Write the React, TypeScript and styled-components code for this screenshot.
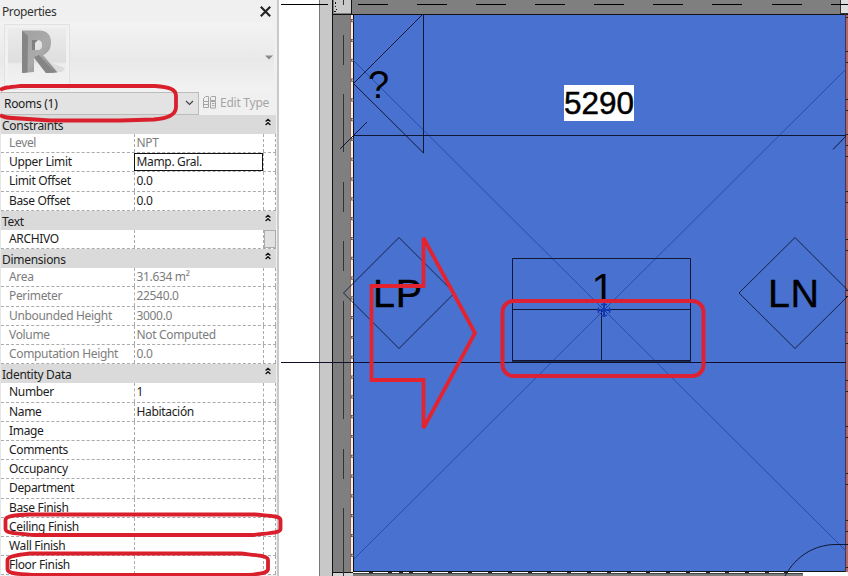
import React from "react";
import styled, { createGlobalStyle } from "styled-components";

const GlobalStyle = createGlobalStyle`
  * { box-sizing: border-box; }
  body { margin: 0; background: #fff; overflow: hidden; }
`;

const Screen = styled.main`
  position: relative;
  display: flex;
  width: 848px;
  height: 576px;
  overflow: hidden;
  background: #fff;
  font-family: "Noto Sans", "Open Sans", sans-serif;
  font-size: 12px;
  color: #1c1c1c;
`;

const Panel = styled.aside`
  flex: none;
  display: flex;
  flex-direction: column;
  width: 279px;
  height: 576px;
  padding-right: 3px;
  background: #f0f0f0;
  border-right: 2px solid #c9c9c9;
`;

const TitleBar = styled.header`
  display: flex;
  flex: none;
  align-items: center;
  justify-content: space-between;
  height: 22px;
  padding: 1px 2px 0 2px;
`;

const Title = styled.span`
  letter-spacing: -0.4px;
  color: #333;
`;

const Preview = styled.section`
  display: flex;
  flex: none;
  align-items: center;
  justify-content: space-between;
  height: 70px;
  padding: 0 1px 0 4px;
  background: linear-gradient(#f3f3f3, #e9e9e9 55%, #f2f2f2);
`;

const TypeBar = styled.section`
  display: flex;
  flex: none;
  height: 22.8px;
`;

const TypeSelect = styled.div`
  display: flex;
  align-items: center;
  justify-content: space-between;
  width: 199px;
  padding: 0 4px;
  background: #e3e3e3;
  border: 1px solid #bcbcbc;
  border-left: 0;
  letter-spacing: -0.3px;
`;

const EditType = styled.div`
  display: flex;
  align-items: center;
  gap: 3px;
  padding: 0 0 2px 4px;
  color: #a5a5a5;
  white-space: nowrap;
  letter-spacing: -0.25px;
`;

const Grid = styled.div`
  display: flex;
  flex-direction: column;
  width: 276px;
  background: #fff;
  border-left: 1px solid #e6e6e6;
`;

const GroupRow = styled.div`
  display: flex;
  flex: none;
  justify-content: space-between;
  height: 19.2px;
  padding: 0 5px 0 1px;
  background: #dadada;
  line-height: 21px;
  letter-spacing: -0.28px;
  color: #222;
`;

const PropertyRow = styled.div<{ $muted?: boolean }>`
  display: grid;
  flex: none;
  grid-template-columns: 133px 129px 13px;
  height: 19.2px;
  line-height: 18px;
  letter-spacing: -0.33px;
  white-space: nowrap;
  border-bottom: 1px dashed #ababab;
  color: ${(p) => (p.$muted ? "#7d7d7d" : "#1c1c1c")};
`;

const NameCell = styled.span`
  padding-left: 8px;
`;

const ValueCell = styled.span<{ $active?: boolean }>`
  padding-left: 1.5px;
  border-left: 1px dashed #ababab;
  ${(p) => p.$active && "border: 1px solid #111; line-height: 16px;"}
`;

const ButtonCell = styled.span`
  display: flex;
  border-left: 1px dashed #ababab;
  border-right: 1px dashed #ababab;
`;

const CellButton = styled.i`
  flex: 1;
  margin-right: -1px;
  background: #e1e1e1;
  border: 1px solid #adadad;
`;

const Canvas = styled.svg`
  display: block;
  flex: none;
  width: 569px;
  height: 576px;
`;

const Markup = styled.svg`
  position: absolute;
  inset: 0;
  width: 848px;
  height: 576px;
  pointer-events: none;
`;

type Property = { name: string; value?: string; muted?: boolean; active?: boolean; button?: boolean };
type Group = { title: string; items: Property[] };

const groups: Group[] = [
  {
    title: "Constraints",
    items: [
      { name: "Level", value: "NPT", muted: true },
      { name: "Upper Limit", value: "Mamp. Gral.", active: true },
      { name: "Limit Offset", value: "0.0" },
      { name: "Base Offset", value: "0.0" },
    ],
  },
  { title: "Text", items: [{ name: "ARCHIVO", button: true }] },
  {
    title: "Dimensions",
    items: [
      { name: "Area", value: "31.634 m²", muted: true },
      { name: "Perimeter", value: "22540.0", muted: true },
      { name: "Unbounded Height", value: "3000.0", muted: true },
      { name: "Volume", value: "Not Computed", muted: true },
      { name: "Computation Height", value: "0.0", muted: true },
    ],
  },
  {
    title: "Identity Data",
    items: [
      { name: "Number", value: "1" },
      { name: "Name", value: "Habitación" },
      { name: "Image" },
      { name: "Comments" },
      { name: "Occupancy" },
      { name: "Department" },
      { name: "Base Finish" },
      { name: "Ceiling Finish" },
      { name: "Wall Finish" },
      { name: "Floor Finish" },
    ],
  },
];

const CloseIcon = () => (
  <svg width="13" height="12" viewBox="0 0 13 12">
    <path d="M1.8 .8 11.200 10.200M11.200 .8 1.800 10.200" stroke="#222" strokeWidth="2.100" />
  </svg>
);

const CollapseIcon = () => (
  <svg width="6" height="14" viewBox="0 -2.500 6 14">
    <path d="M.6 4 3 1.800 5.400 4M.6 7.400 3 5.200 5.400 7.400" fill="none" stroke="#111" strokeWidth="1.300" />
  </svg>
);

const RevitLogo = () => (
  <svg width="66" height="66" viewBox="0 0 66 66">
    <defs>
      <linearGradient id="logoBack" x2="0" y2="1">
        <stop offset="0" stopColor="#ececec" />
        <stop offset=".58" stopColor="#dedede" />
        <stop offset=".62" stopColor="#ececec" />
        <stop offset="1" stopColor="#f2f2f2" />
      </linearGradient>
      <linearGradient id="logoFace" x2="1" y2="1">
        <stop offset="0" stopColor="#a0a0a0" />
        <stop offset=".5" stopColor="#ababab" />
        <stop offset="1" stopColor="#858585" />
      </linearGradient>
    </defs>
    <rect x=".5" y=".5" width="65" height="65" fill="#f1f1f1" stroke="#e2e2e2" />
    <path d="M4 4h58v58H4z" fill="url(#logoBack)" />
    <path d="M40 36 61 44 58 48 44 48z" fill="#dcdcdc" />
    <path
      fillRule="evenodd"
      d="M18 6.500H35C43 6.500 47 11 47 18 47 25 44 29 39 31L53.500 48.500 42 49 30 34V48L18 49zM28 16V26H33C37 26 38 24 38 21 38 17 36 16 32 16z"
      fill="url(#logoFace)"
    />
    <path d="M18 6.500 24 12 23.500 48.500 18 49z" fill="#858585" />
    <path d="M28 16H34L31 19V26H28z" fill="#808080" />
    <path d="M30 33 35 31 51 48.500 42 49z" fill="#858585" />
  </svg>
);

const EditTypeIcon = () => (
  <svg width="14" height="14" viewBox="0 0 14 14" fill="none" stroke="#a5a5a5">
    <path d="M.5 12.500V3.500L2.500 1.500H5.500V12.500zM.5 6.500H5.500M7.500 5.500V2.500L8.500 1.500H12.500V5.500zM.5 9.500H5.500" />
    <path d="M7.500 6.500H12.500V13H7.500zM9 8.500H11.500M9 10.500H11.500" />
  </svg>
);

const PropertiesPanel = () => (
  <Panel>
    <TitleBar>
      <Title>Properties</Title>
      <CloseIcon />
    </TitleBar>
    <Preview>
      <RevitLogo />
      <svg width="8" height="5" viewBox="0 0 8 5">
        <path d="M0 .5H8L4 4.500z" fill="#8a8a8a" />
      </svg>
    </Preview>
    <TypeBar>
      <TypeSelect>
        Rooms (1)
        <svg width="9" height="6" viewBox="0 0 9 6">
          <path d="M1 1 4.500 4.500 8 1" fill="none" stroke="#444" strokeWidth="1.200" />
        </svg>
      </TypeSelect>
      <EditType>
        <EditTypeIcon />
        Edit Type
      </EditType>
    </TypeBar>
    <Grid>
      {groups.map((group) => (
        <React.Fragment key={group.title}>
          <GroupRow>
            {group.title}
            <CollapseIcon />
          </GroupRow>
          {group.items.map((item) => (
            <PropertyRow key={item.name} $muted={item.muted}>
              <NameCell>{item.name}</NameCell>
              <ValueCell $active={item.active}>{item.value}</ValueCell>
              <ButtonCell>{item.button && <CellButton />}</ButtonCell>
            </PropertyRow>
          ))}
        </React.Fragment>
      ))}
    </Grid>
  </Panel>
);

const studs = Array.from({ length: 28 }, (_, i) => 20.5 + i * 19.8);
const brickJoints = [17, 51, 62, 99, 110, 134, 145, 156, 191, 202, 239, 250, 290, 296, 332, 343, 380, 391, 426, 437, 473, 484, 520, 531, 567];
const floorStuds = [369, 388, 399, 409, 428, 448, 468, 488, 508, 528, 547, 567, 587, 607, 627, 646, 666, 686, 706, 725, 745, 765, 784];

const FloorPlan = () => (
  <Canvas viewBox="279 0 569 576" fontFamily='"Liberation Sans", Arial, sans-serif'>
    <rect x="319" y="0" width="14" height="576" fill="#c8c8c8" />
    <rect x="333" y="0" width="19" height="576" fill="#7f7f7f" />
    <rect x="333" y="0" width="515" height="14" fill="#7f7f7f" />
    <rect x="334" y="0" width="18" height="13" fill="#c9c9c9" />
    <rect x="841" y="0" width="7" height="13" fill="#dedede" />
    <rect x="350" y="15" width="1" height="558" fill="#8b6659" />
    <rect x="351" y="15" width="2" height="558" fill="#f3ece2" />
    <rect x="354" y="15" width="492" height="556" fill="#4972d0" />
    <rect x="846" y="15" width="2" height="557" fill="#b36868" />
    <rect x="353" y="572" width="495" height="4" fill="#fff" />
    <rect x="353" y="573" width="450" height="3" fill="#7f7f7f" />
    <rect x="333" y="573" width="20" height="3" fill="#d4d4d4" />
    <g stroke="#111" fill="none">
      <path d="M319.5 0V576" stroke="#777" />
      <path d="M332.5 0V576M333 14.5H848M351.5 0V14M353.5 14V572M353 571.5H846M333 572.5H353" />
      <path d="M845.5 14V572" stroke="#493057" />
      <path d="M840.5 0V14M841 13.5H848" stroke="#333" />
      <path d="M353 573.5H803" stroke="#444" />
      <path d="M281 4.5H328M358 4.5H388M417 4.5H447M476 4.5H506M535 4.5H565M594 4.5H624M653 4.5H683M712 4.5H742M772 4.5H802M831 4.5H848" stroke="#000" />
      <path d="M343.5 35V65M343.5 94V152M343.5 182V212M343.5 241V271M343.5 301V419M343.5 449V479M343.5 508V576M343.5 0V5" stroke="#333" />
      <path d="M335.5 2V4M336 9.5H337M335.5 6V7M334 11.5H336" />
    </g>
    <g fill="#e6dccb" stroke="#444" strokeWidth=".6">
      {studs.map((y) => (
        <rect key={y} x="351.3" y={y - 1} width="1.8" height="2.4" />
      ))}
    </g>
    <g fill="#222">
      {floorStuds.map((x) => (
        <rect key={x} x={x} y="572" width="4" height="1" />
      ))}
      {brickJoints.map((y) => (
        <rect key={y} x="846" y={y} width="2" height="1" />
      ))}
    </g>
    <path d="M354 61 846 551M846 69 354 559" stroke="#214eb4" fill="none" />
    <g stroke="#101735" fill="none">
      <path d="M423.5 14V153L353.5 83.5 422.5 14.5" />
      <path d="M353 135.5H846M340 149 367 122M833 149.5 846 136" />
      <path d="M281 362.5H846" stroke="#101028" />
      <path d="M399 237.5 454.5 293 399 348.5 343.5 293zM848 290.5 795 237.5 739 293 795 348.5 848 296" strokeWidth=".9" />
      <path d="M512.5 258.5H690.5V360.5H512.5zM512 309.5H691M601.5 310V361" />
      <path d="M512 361H691" strokeWidth="1.4" />
      <path d="M785 576C796 556 814 545 835 544.5H848" />
    </g>
    <g stroke="#1239ae" strokeWidth="2" fill="none">
      <path d="M604 303V317M597 310H611" />
      <path d="M601 304.5H607M601 315.5H607M598.5 307.5V313M609.5 307.5V313" strokeWidth="1.4" />
      <path d="M599.5 305.5 608.5 314.5M608.5 305.5 599.5 314.5" strokeWidth="1" />
    </g>
    <rect x="564" y="85" width="70" height="36" fill="#fff" />
    <g fill="#000">
      <text x="564" y="113.5" fontSize="32" textLength="70" lengthAdjust="spacingAndGlyphs" stroke="#000" strokeWidth=".5">5290</text>
      <text x="368" y="98" fontSize="38">?</text>
      <text x="373" y="307" fontSize="39.5" textLength="49" stroke="#000" strokeWidth=".4">LP</text>
      <text x="768" y="307" fontSize="39.5" textLength="51" stroke="#000" strokeWidth=".4">LN</text>
      <text x="591.5" y="302" fontSize="41">1</text>
    </g>
  </Canvas>
);

const App = () => (
  <Screen>
    <GlobalStyle />
    <PropertiesPanel />
    <FloorPlan />
    <Markup viewBox="0 0 848 576" fill="none" stroke="#d91f2b" strokeWidth="3.8" strokeLinejoin="round">
      <path d="M0 90C3 87.500 9 87 20 86H155C169 87 176 89 176 96V107C176 115 168 118 154 119.500L120 120.500H50L20 118.500C8 118 3 117.500 0 115" />
      <path d="M30 514.500H255C271 516 280.500 516 280.500 520V529C280.500 533 270 533 253 535H35C18 533.500 5.500 533.500 5.500 529V520C5.500 516 15 515 30 514.500z" />
      <path d="M30 553.500H240C259 555.500 268 555.500 268 560V569C268 573 262 573.500 248 575H32C15 573.500 7.500 573.500 7.500 569V560C7.500 556.500 16 555 30 553.500z" />
      <path d="M371.500 286H423.500V238L475 333 423.500 428V380H371.500z" stroke="#e32330" strokeLinejoin="miter" strokeMiterlimit="3" />
      <rect x="502.500" y="301" width="201" height="75" rx="11" stroke="#dc2134" strokeWidth="4" />
    </Markup>
  </Screen>
);

export default App;
